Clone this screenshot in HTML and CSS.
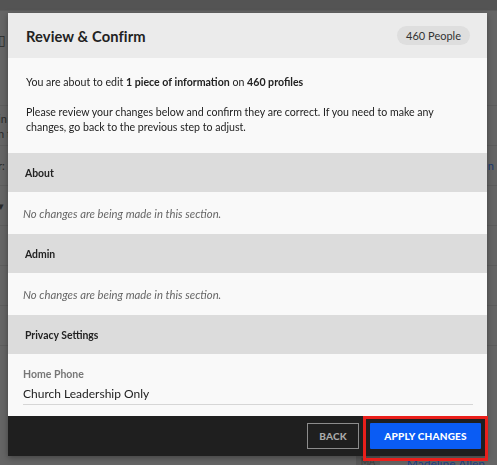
FILE: index.html
```html
<!DOCTYPE html>
<html lang="en">
<head>
    <meta charset="UTF-8">
    <meta name="viewport" content="width=device-width, initial-scale=1.0">
    <title>Review &amp; Confirm</title>
    <link rel="stylesheet" href="styles.css">
</head>
<body>
    <!-- page behind the dimmed overlay -->
    <div class="page">
        <div class="topbar"></div>
        <div class="page-row tall"><span class="left-icon">&#9647;</span></div>
        <div class="page-row"><span class="left-text">in<br>n t</span></div>
        <div class="page-row"><span class="left-text">r:</span><span class="right-link">n</span></div>
        <div class="page-row"><span class="left-text">&#9662;</span></div>
        <div class="page-row"></div>
        <div class="page-row"></div>
        <div class="page-row"></div>
        <div class="page-row last">
            <span class="avatar">MA</span>
            <span class="person">Madeline Allen</span>
        </div>
    </div>

    <div class="modal">
        <div class="modal-header">
            <h1>Review &amp; Confirm</h1>
            <span class="badge">460 People</span>
        </div>

        <div class="modal-body">
            <div class="intro">
                <p>You are about to edit <b>1 piece of information</b> on <b>460 profiles</b></p>
                <p>Please review your changes below and confirm they are correct. If you need to make any changes, go back to the previous step to adjust.</p>
            </div>

            <div class="section-head">About</div>
            <div class="section-empty">No changes are being made in this section.</div>

            <div class="section-head">Admin</div>
            <div class="section-empty">No changes are being made in this section.</div>

            <div class="section-head">Privacy Settings</div>
            <div class="field">
                <div class="field-label">Home Phone</div>
                <div class="field-value">Church Leadership Only</div>
            </div>
        </div>

        <div class="modal-footer">
            <button class="btn-back">BACK</button>
            <button class="btn-apply">APPLY CHANGES</button>
        </div>
    </div>

    <div class="highlight"></div>
</body>
</html>
```

FILE: styles.css
```css
* {
    margin: 0;
    padding: 0;
    box-sizing: border-box;
}

body {
    font-family: 'Lato', 'Open Sans', sans-serif;
    background-color: #656565;
    color: #222;
    width: 497px;
    height: 465px;
    overflow: hidden;
}

/* dimmed page */
.page {
    height: 465px;
    display: flex;
    flex-direction: column;
}

.topbar {
    height: 11px;
    background: #545454;
    border-bottom: 1px solid #5c5c5c;
}

.page-row {
    height: 40px;
    border-bottom: 1px solid #5d5d5d;
    display: flex;
    justify-content: space-between;
    align-items: center;
    overflow: hidden;
}

.page-row.tall {
    height: 95px;
    align-items: flex-start;
    padding-top: 20px;
}

.page-row.last {
    flex: 1;
    border-bottom: none;
    align-items: flex-end;
}

.left-icon {
    color: #2a2a2a;
    font-size: 14px;
    margin-left: -2px;
}

.left-text {
    color: #2a2a2a;
    font-size: 11px;
    line-height: 15px;
    margin-left: -2px;
}

.right-link {
    color: #1a3a70;
    font-size: 11px;
    margin-left: auto;
    margin-right: 3px;
}

.avatar {
    margin-left: 356px;
    width: 24px;
    height: 10px;
    background: #595959;
    color: #3c3c3c;
    font-size: 9px;
    text-align: center;
    line-height: 14px;
    overflow: hidden;
}

.person {
    color: #1d3f86;
    font-size: 12px;
    line-height: 10px;
    height: 6px;
    overflow: hidden;
    margin-right: 12px;
    margin-left: auto;
    align-self: flex-end;
}

/* modal */
.modal {
    position: fixed;
    left: 8px;
    top: 13px;
    width: 479px;
    height: 443px;
    display: flex;
    flex-direction: column;
    background: #f9f9f9;
    box-shadow: 0 2px 6px rgba(0, 0, 0, 0.35);
    overflow: hidden;
}

.modal-header {
    height: 45px;
    flex-shrink: 0;
    background: #ebebeb;
    padding: 0 17px 0 18px;
    display: flex;
    justify-content: space-between;
    align-items: center;
}

.modal-header h1 {
    font-size: 14.7px;
    font-weight: 700;
    color: #222;
    letter-spacing: 0.1px;
}

.badge {
    background: #dedede;
    border-radius: 10px;
    height: 19px;
    line-height: 19px;
    padding: 0 9px;
    font-size: 11px;
    color: #333;
}

.modal-body {
    flex: 1;
    overflow: hidden;
}

.intro {
    padding: 17px 18px 18px;
    font-size: 10.6px;
    line-height: 15px;
    color: #222;
}

.intro p + p {
    margin-top: 15px;
}

.section-head {
    height: 39px;
    background: #dcdcdc;
    padding-left: 17px;
    display: flex;
    align-items: center;
    font-size: 10.4px;
    font-weight: 700;
    color: #222;
}

.section-empty {
    height: 42px;
    padding-left: 15px;
    display: flex;
    align-items: center;
    font-size: 11.3px;
    font-style: italic;
    color: #666;
}

.field {
    padding: 14px 14px 0 15px;
}

.field-label {
    font-size: 10.5px;
    font-weight: 700;
    color: #777;
    line-height: 12px;
}

.field-value {
    font-size: 12px;
    color: #222;
    line-height: 16px;
    padding: 6px 0 2px;
    border-bottom: 1px solid #d6d6d6;
}

.modal-footer {
    height: 40px;
    flex-shrink: 0;
    background: #1f1f1f;
    display: flex;
    justify-content: flex-end;
    align-items: center;
    gap: 11px;
    padding-right: 6px;
}

.modal-footer button {
    height: 26px;
    font-family: inherit;
    font-size: 10px;
    font-weight: 900;
    letter-spacing: 0.2px;
    cursor: pointer;
}

.btn-back {
    width: 52px;
    background: transparent;
    border: 1px solid #8c8c8c;
    color: #a9a9a9;
}

.btn-apply {
    width: 111px;
    background: #0a5cf4;
    border: none;
    border-radius: 1px;
    color: #fff;
}

/* annotation box drawn over the screenshot */
.highlight {
    position: fixed;
    left: 363px;
    top: 416px;
    width: 125px;
    height: 45px;
    border: 3px solid #ea1f1b;
}
```
